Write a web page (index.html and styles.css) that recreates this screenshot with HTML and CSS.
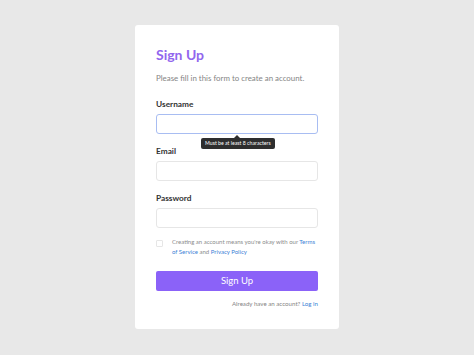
FILE: index.html
```html
<!DOCTYPE html>
<html>
<head>
<meta charset="utf-8">
<link rel="stylesheet" href="styles.css">
</head>
<body>
<div class="page">
  <form class="card">
    <h1 class="title">Sign Up</h1>
    <p class="subtitle">Please fill in this form to create an account.</p>
    <div class="field first">
      <label class="label">Username</label>
      <div class="input-wrap">
        <div class="input focused"></div>
        <div class="tooltip">Must be at least 8 characters</div>
      </div>
    </div>
    <div class="field">
      <label class="label">Email</label>
      <div class="input"></div>
    </div>
    <div class="field">
      <label class="label">Password</label>
      <div class="input"></div>
    </div>
    <div class="terms">
      <span class="checkbox"></span>
      <span class="terms-text">Creating an account means you're okay with our <a class="link">Terms of Service</a> and <a class="link">Privacy Policy</a></span>
    </div>
    <div class="button">Sign Up</div>
    <p class="login">Already have an account? <a class="link">Log in</a></p>
  </form>
</div>
</body>
</html>
```
FILE: styles.css
```css
html, body {
  margin: 0;
  padding: 0;
  background: #e8e8e8;
  font-family: Lato, "Open Sans", sans-serif;
}
.page {
  width: 474px;
  height: 355px;
  display: flex;
  justify-content: center;
  align-items: flex-start;
  padding-top: 25px;
  box-sizing: border-box;
}
.card {
  width: 204px;
  height: 304px;
  background: #fff;
  border-radius: 3px;
  box-sizing: border-box;
  padding: 20px 21px 0 21px;
  display: flex;
  flex-direction: column;
}
.title {
  margin: 0;
  font-size: 14px;
  font-weight: 700;
  color: #9166ee;
  line-height: 20px;
}
.subtitle {
  margin: 7px 0 0 0;
  font-size: 7.9px;
  line-height: 12px;
  color: #858585;
}
.field {
  display: flex;
  flex-direction: column;
  margin-top: 11px;
}
.field.first {
  margin-top: 14px;
}
.label {
  font-size: 8.3px;
  font-weight: 700;
  color: #333;
  line-height: 12px;
  margin-bottom: 4px;
}
.input-wrap {
  position: relative;
}
.input {
  height: 20px;
  border: 1px solid #e6e6e6;
  border-radius: 3px;
  box-sizing: border-box;
  background: #fff;
}
.input.focused {
  border-color: #a8bdf2;
}
.tooltip {
  position: absolute;
  left: 45px;
  top: 24px;
  background: #2e2e2e;
  color: #fff;
  font-size: 5.2px;
  line-height: 11px;
  height: 11px;
  padding: 0 4px;
  border-radius: 2px;
  white-space: nowrap;
}
.tooltip::before {
  content: "";
  position: absolute;
  left: 33px;
  top: -3px;
  border-left: 3px solid transparent;
  border-right: 3px solid transparent;
  border-bottom: 3px solid #2e2e2e;
}
.terms {
  display: flex;
  gap: 9px;
  margin-top: 9px;
}
.checkbox {
  flex: none;
  width: 5px;
  height: 5px;
  border: 1px solid #e6e6e6;
  border-radius: 1px;
  margin-top: 3px;
}
.terms-text {
  font-size: 6px;
  line-height: 10px;
  color: #8c8c8c;
}
.link {
  color: #3d7fd6;
}
.button {
  margin-top: 14px;
  height: 20px;
  background: #8b62f8;
  border-radius: 2px;
  color: #fff;
  font-size: 9.5px;
  line-height: 20px;
  text-align: center;
}
.login {
  margin: 8px 0 0 0;
  text-align: right;
  font-size: 6.15px;
  line-height: 10px;
  color: #858585;
}
```
